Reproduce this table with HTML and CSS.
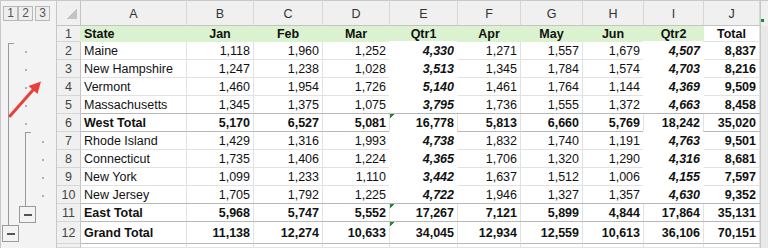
FILE: index.html
```html
<!DOCTYPE html>
<html lang="en">
<head>
  <meta charset="UTF-8" />
  <title>Outline</title>
  <link rel="stylesheet" href="styles.css">
</head>
<body>
  <div class="sheet">
    <div class="outline">
      <div class="lvl lvl-1">1</div>
      <div class="lvl lvl-2">2</div>
      <div class="lvl lvl-3">3</div>

      <div class="bracket br-1"></div>
      <div class="bracket br-2"></div>

      <div class="dot d2" style="grid-row: 3"></div>
      <div class="dot d2" style="grid-row: 4"></div>
      <div class="dot d2" style="grid-row: 5"></div>
      <div class="dot d2" style="grid-row: 6"></div>
      <div class="dot d2" style="grid-row: 7"></div>
      <div class="dot d3" style="grid-row: 8"></div>
      <div class="dot d3" style="grid-row: 9"></div>
      <div class="dot d3" style="grid-row: 10"></div>
      <div class="dot d3" style="grid-row: 11"></div>

      <div class="minus mn-2"></div>
      <div class="minus mn-1"></div>
    </div>

    <div class="grid">
      <div class="corner"></div>
      <div class="ch">A</div><div class="ch">B</div><div class="ch">C</div><div class="ch">D</div><div class="ch">E</div>
      <div class="ch">F</div><div class="ch">G</div><div class="ch">H</div><div class="ch">I</div><div class="ch">J</div>
      <div class="strip top"><span class="handle"></span></div>

      <div class="rh">1</div>
      <div class="c g b">State</div>
      <div class="c g b hd">Jan</div><div class="c g b hd">Feb</div><div class="c g b hd">Mar</div><div class="c g b hd">Qtr1</div>
      <div class="c g b hd">Apr</div><div class="c g b hd">May</div><div class="c g b hd">Jun</div><div class="c g b hd">Qtr2</div>
      <div class="c b hd">Total</div>
      <div class="strip"></div>

      <div class="rh">2</div>
      <div class="c">Maine</div>
      <div class="c n">1,118</div><div class="c n">1,960</div><div class="c n">1,252</div><div class="c n w b i">4,330</div>
      <div class="c n">1,271</div><div class="c n">1,557</div><div class="c n">1,679</div><div class="c n w b i">4,507</div>
      <div class="c n b">8,837</div>
      <div class="strip"></div>

      <div class="rh">3</div>
      <div class="c">New Hampshire</div>
      <div class="c n">1,247</div><div class="c n">1,238</div><div class="c n">1,028</div><div class="c n w b i">3,513</div>
      <div class="c n">1,345</div><div class="c n">1,784</div><div class="c n">1,574</div><div class="c n w b i">4,703</div>
      <div class="c n b">8,216</div>
      <div class="strip"></div>

      <div class="rh">4</div>
      <div class="c">Vermont</div>
      <div class="c n">1,460</div><div class="c n">1,954</div><div class="c n">1,726</div><div class="c n w b i">5,140</div>
      <div class="c n">1,461</div><div class="c n">1,764</div><div class="c n">1,144</div><div class="c n w b i">4,369</div>
      <div class="c n b">9,509</div>
      <div class="strip"></div>

      <div class="rh">5</div>
      <div class="c">Massachusetts</div>
      <div class="c n">1,345</div><div class="c n">1,375</div><div class="c n">1,075</div><div class="c n w b i">3,795</div>
      <div class="c n">1,736</div><div class="c n">1,555</div><div class="c n">1,372</div><div class="c n w b i">4,663</div>
      <div class="c n b">8,458</div>
      <div class="strip"></div>

      <div class="rh">6</div>
      <div class="c t b">West Total</div>
      <div class="c t n b">5,170</div><div class="c t n b">6,527</div><div class="c t n b">5,081</div><div class="c t n b e">16,778</div>
      <div class="c t n b">5,813</div><div class="c t n b">6,660</div><div class="c t n b">5,769</div><div class="c t n b">18,242</div>
      <div class="c t n b">35,020</div>
      <div class="strip"></div>

      <div class="rh">7</div>
      <div class="c">Rhode Island</div>
      <div class="c n">1,429</div><div class="c n">1,316</div><div class="c n">1,993</div><div class="c n w b i">4,738</div>
      <div class="c n">1,832</div><div class="c n">1,740</div><div class="c n">1,191</div><div class="c n w b i">4,763</div>
      <div class="c n b">9,501</div>
      <div class="strip"></div>

      <div class="rh">8</div>
      <div class="c">Connecticut</div>
      <div class="c n">1,735</div><div class="c n">1,406</div><div class="c n">1,224</div><div class="c n w b i">4,365</div>
      <div class="c n">1,706</div><div class="c n">1,320</div><div class="c n">1,290</div><div class="c n w b i">4,316</div>
      <div class="c n b">8,681</div>
      <div class="strip"></div>

      <div class="rh">9</div>
      <div class="c">New York</div>
      <div class="c n">1,099</div><div class="c n">1,233</div><div class="c n">1,110</div><div class="c n w b i">3,442</div>
      <div class="c n">1,637</div><div class="c n">1,512</div><div class="c n">1,006</div><div class="c n w b i">4,155</div>
      <div class="c n b">7,597</div>
      <div class="strip"></div>

      <div class="rh">10</div>
      <div class="c">New Jersey</div>
      <div class="c n">1,705</div><div class="c n">1,792</div><div class="c n">1,225</div><div class="c n w b i">4,722</div>
      <div class="c n">1,946</div><div class="c n">1,327</div><div class="c n">1,357</div><div class="c n w b i">4,630</div>
      <div class="c n b">9,352</div>
      <div class="strip"></div>

      <div class="rh">11</div>
      <div class="c t b">East Total</div>
      <div class="c t n b">5,968</div><div class="c t n b">5,747</div><div class="c t n b">5,552</div><div class="c t n b e">17,267</div>
      <div class="c t n b">7,121</div><div class="c t n b">5,899</div><div class="c t n b">4,844</div><div class="c t n b">17,864</div>
      <div class="c t n b">35,131</div>
      <div class="strip"></div>

      <div class="rh">12</div>
      <div class="c t b">Grand Total</div>
      <div class="c t n b">11,138</div><div class="c t n b">12,274</div><div class="c t n b">10,633</div><div class="c t n b e">34,045</div>
      <div class="c t n b">12,934</div><div class="c t n b">12,559</div><div class="c t n b">10,613</div><div class="c t n b">36,106</div>
      <div class="c t n b">70,151</div>
      <div class="strip"></div>

      <div class="rh"></div>
      <div class="c"></div><div class="c"></div><div class="c"></div><div class="c"></div><div class="c"></div>
      <div class="c"></div><div class="c"></div><div class="c"></div><div class="c"></div><div class="c"></div>
      <div class="strip"></div>
    </div>

    <!-- callout arrow drawn over the outline bar -->
    <svg class="arrow" width="50" height="130" viewBox="0 0 50 130">
      <line x1="10" y1="116" x2="33" y2="90" stroke="#e8403a" stroke-width="3" stroke-linecap="round"/>
      <polygon points="41,81.5 28.5,86 37.5,94" fill="#e8403a"/>
    </svg>
  </div>
</body>
</html>
```

FILE: styles.css
```css
:root {
  --rows: 26px 16px repeat(10, 18px) 22px 4px;
}
body {
  margin: 0;
  background: #ffffff;
  font-family: 'Liberation Sans', Arial, sans-serif;
  font-size: 12.5px;
  color: #111111;
}
.sheet {
  display: flex;
  position: relative;
  width: 768px;
  height: 248px;
  overflow: hidden;
}

/* outline bar */
.outline {
  box-sizing: border-box;
  width: 57px;
  display: grid;
  grid-template-columns: 17px 17px 17px 4px;
  grid-template-rows: var(--rows);
  background: #f3f3f3;
  border-left: 1px solid #c8c8c8;
  border-right: 1px solid #c8c8c8;
  border-top: 1px solid #c8c8c8;
}
.lvl {
  grid-row: 1;
  justify-self: start;
  box-sizing: border-box;
  width: 15px;
  height: 15px;
  margin-top: 5px;
  border: 1px solid #b8b8b8;
  background: #eeeeee;
  color: #555555;
  font-size: 12px;
  line-height: 13px;
  text-align: center;
}
.lvl-1 { grid-column: 1; margin-left: 2px; }
.lvl-2 { grid-column: 2; }
.lvl-3 { grid-column: 3; }
.bracket {
  width: 5px;
  margin-left: 7px;
  border-left: 1px solid #9a9a9a;
  border-top: 1px solid #9a9a9a;
}
.br-1 { grid-column: 1; grid-row: 3 / 13; margin-bottom: -2px; }
.br-2 { grid-column: 2; grid-row: 8 / 12; margin-top: -1px; margin-bottom: -1px; }
.dot {
  width: 2px;
  height: 2px;
  align-self: center;
  margin-left: 7px;
  background: #b0b0b0;
}
.d2 { grid-column: 2; }
.d3 { grid-column: 3; }
.minus {
  box-sizing: border-box;
  width: 17px;
  height: 17px;
  border: 1px solid #9a9a9a;
  background: #f3f3f3;
  display: flex;
  align-items: center;
  justify-content: center;
}
.minus::after {
  content: "";
  width: 8px;
  height: 2px;
  background: #555555;
}
.mn-1 { grid-column: 1; grid-row: 13; margin: 2px 0 0 1px; }
.mn-2 { grid-column: 2; grid-row: 12; margin: 1px 0 0 1px; }

/* worksheet */
.grid {
  display: grid;
  grid-template-columns: 24px 106px 67px 69px 67px 68px 63px 62px 61px 60px 56px 8px;
  grid-template-rows: var(--rows);
}
.grid > div {
  box-sizing: border-box;
  overflow: hidden;
  white-space: nowrap;
}
.corner,
.ch {
  background: #f0f0f0;
  border-top: 1px solid #c8c8c8;
  border-bottom: 1px solid #c4c4c4;
  border-right: 1px solid #d6d6d6;
}
.corner {
  background-image: linear-gradient(to top left, #c4c4c4 50%, transparent 50%);
  background-size: 11px 11px;
  background-position: right 3px bottom 6px;
  background-repeat: no-repeat;
  border-right-color: #c4c4c4;
}
.ch {
  display: flex;
  align-items: center;
  justify-content: center;
  color: #333333;
  padding-top: 1px;
}
.rh {
  background: #f0f0f0;
  border-right: 1px solid #c4c4c4;
  border-bottom: 1px solid #d6d6d6;
  color: #444444;
  display: flex;
  align-items: center;
  justify-content: center;
}
.c {
  display: flex;
  align-items: center;
  padding: 0 3px;
  border-right: 1px solid #e2e2e2;
  border-bottom: 1px solid #e2e2e2;
}
.n { justify-content: flex-end; }
.hd { justify-content: center; }
.b { font-weight: bold; }
.i { font-style: italic; }
.g {
  background: #daf2d0;
  border-color: #daf2d0;
  box-shadow: -1px 0 0 #daf2d0;
}
.w {
  background: #ffffff;
  border-color: #ffffff;
  box-shadow: -1px -1px 0 #ffffff;
}
.t {
  border-bottom-color: #b8b8b8;
  box-shadow: 0 -1px 0 #b8b8b8;
}
.e {
  background-image: linear-gradient(135deg, #1f8a34 0 3px, transparent 3px);
  background-size: 6px 6px;
  background-repeat: no-repeat;
}
.strip {
  background: #e9e9e9;
  border-left: 1px solid #c8c8c8;
}
.strip.top {
  background: #f0f0f0;
  border-top: 1px solid #c8c8c8;
}
.handle {
  display: block;
  width: 3px;
  height: 3px;
  margin-top: 18px;
  background: #1f8a34;
}

.arrow {
  position: absolute;
  left: 0;
  top: 0;
}
```
